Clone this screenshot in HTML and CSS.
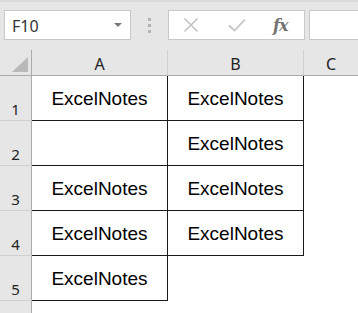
FILE: index.html
```html
<!DOCTYPE html>
<html>
<head>
<meta charset="utf-8">
<link rel="stylesheet" href="styles.css">
</head>
<body>
<div class="app">
  <div class="fbar">
    <div class="namebox">
      <span class="nb-text">F10</span>
      <svg class="nb-arrow" width="8" height="5" viewBox="0 0 8 5"><path d="M0 0H8L4 4Z" fill="#7a7a7a"/></svg>
    </div>
    <div class="grip"><i></i><i></i><i></i></div>
    <div class="btns">
      <svg class="ic-x" width="16" height="16" viewBox="0 0 16 16"><path d="M1.5 1.5L14.5 14.5M14.5 1.5L1.5 14.5" stroke="#c4c4c4" stroke-width="1.6" fill="none"/></svg>
      <svg class="ic-ok" width="18" height="14" viewBox="0 0 18 14"><path d="M1 7.5L6.5 12.5L17 1.5" stroke="#c4c4c4" stroke-width="1.8" fill="none"/></svg>
      <span class="fx">fx</span>
    </div>
    <div class="finput"></div>
  </div>
  <div class="sheet">
    <div class="corner"><svg width="16" height="15" viewBox="0 0 16 15"><path d="M16 0V15H0Z" fill="#b9b9b9"/></svg></div>
    <div class="ch">A</div>
    <div class="ch">B</div>
    <div class="ch last">C</div>

    <div class="rh">1</div>
    <div class="c b">ExcelNotes</div>
    <div class="c b">ExcelNotes</div>
    <div class="c"></div>

    <div class="rh">2</div>
    <div class="c b"></div>
    <div class="c b">ExcelNotes</div>
    <div class="c"></div>

    <div class="rh">3</div>
    <div class="c b">ExcelNotes</div>
    <div class="c b">ExcelNotes</div>
    <div class="c"></div>

    <div class="rh">4</div>
    <div class="c b">ExcelNotes</div>
    <div class="c b">ExcelNotes</div>
    <div class="c"></div>

    <div class="rh">5</div>
    <div class="c b">ExcelNotes</div>
    <div class="c"></div>
    <div class="c"></div>

    <div class="rh">6</div>
    <div class="c"></div>
    <div class="c"></div>
    <div class="c"></div>
  </div>
</div>
</body>
</html>
```
FILE: styles.css
```css
html, body {
  margin: 0;
  padding: 0;
  background: #ffffff;
}
.app {
  width: 358px;
  height: 313px;
  overflow: hidden;
}
.fbar {
  box-sizing: border-box;
  height: 50px;
  background: #e6e6e6;
  border-top: 2px solid #d9d9d9;
  display: flex;
  align-items: flex-start;
  padding-top: 8px;
  padding-left: 4px;
}
.namebox {
  box-sizing: border-box;
  width: 127px;
  height: 30px;
  background: #fff;
  border: 1px solid #c8c8c8;
  display: flex;
  align-items: center;
  justify-content: space-between;
  padding: 0 8px 0 7px;
  font-family: "Noto Sans", "Open Sans", sans-serif;
  font-size: 16px;
  color: #333;
}
.nb-text {
  margin-top: 1px;
}
.grip {
  width: 37px;
  height: 30px;
  display: flex;
  flex-direction: column;
  align-items: center;
  justify-content: center;
  gap: 3px;
}
.grip i {
  display: block;
  width: 3px;
  height: 3px;
  background: #b3b3b3;
}
.btns {
  box-sizing: border-box;
  width: 137px;
  height: 30px;
  background: #fff;
  border: 1px solid #c8c8c8;
  display: flex;
  align-items: center;
  padding-left: 14px;
}
.ic-x {
  margin-right: 29px;
}
.ic-ok {
  margin-right: 27px;
}
.fx {
  font-family: "DejaVu Serif", "Liberation Serif", serif;
  font-style: italic;
  font-weight: bold;
  font-size: 16px;
  color: #727272;
  letter-spacing: -1px;
}
.finput {
  box-sizing: border-box;
  margin-left: 4px;
  flex: 1;
  height: 30px;
  background: #fff;
  border: 1px solid #c8c8c8;
  border-right: none;
}
.sheet {
  display: grid;
  grid-template-columns: 32px 136px 136px 1fr;
  grid-template-rows: 26px 45px 45px 45px 45px 45px 45px;
}
.corner {
  box-sizing: border-box;
  background: #e6e6e6;
  border-right: 1px solid #ababab;
  border-bottom: 1px solid #ababab;
  display: flex;
  align-items: flex-end;
  justify-content: flex-end;
  padding: 0 3px 3px 0;
}
.ch {
  box-sizing: border-box;
  background: #e6e6e6;
  border-right: 1px solid #d0d0d0;
  border-bottom: 1px solid #ababab;
  display: flex;
  align-items: center;
  justify-content: center;
  font-family: "Noto Sans", "Open Sans", sans-serif;
  font-size: 16px;
  color: #222;
  padding-top: 3px;
}
.ch.last {
  border-right: none;
}
.rh {
  box-sizing: border-box;
  background: #e6e6e6;
  border-right: 1px solid #ababab;
  border-bottom: 1px solid #d0d0d0;
  display: flex;
  align-items: flex-end;
  justify-content: center;
  font-family: "Noto Sans", "Open Sans", sans-serif;
  font-size: 15px;
  line-height: 15px;
  color: #222;
  padding-bottom: 3px;
}
.c {
  box-sizing: border-box;
  display: flex;
  align-items: center;
  justify-content: center;
  font-family: "Liberation Sans", Arial, sans-serif;
  font-size: 19px;
  color: #000;
  padding-top: 2px;
}
.c.b {
  border-right: 1px solid #1a1a1a;
  border-bottom: 1px solid #1a1a1a;
}
```
